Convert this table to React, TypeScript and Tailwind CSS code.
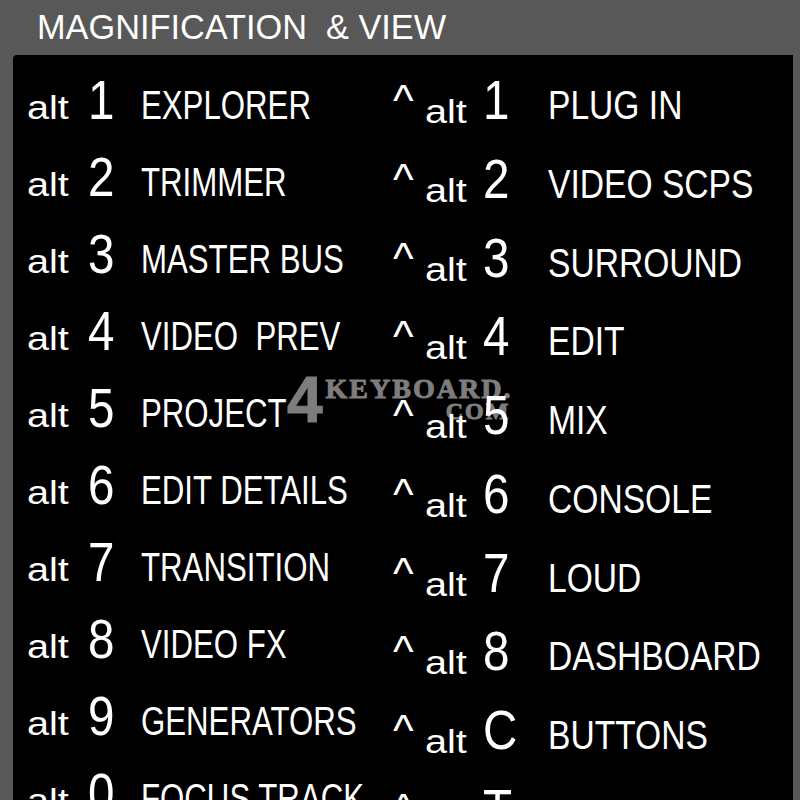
import React from "react";

const left: [string, string][] = [
  ["1", "EXPLORER"],
  ["2", "TRIMMER"],
  ["3", "MASTER BUS"],
  ["4", "VIDEO  PREV"],
  ["5", "PROJECT"],
  ["6", "EDIT DETAILS"],
  ["7", "TRANSITION"],
  ["8", "VIDEO FX"],
  ["9", "GENERATORS"],
  ["0", "FOCUS TRACK"],
];

const right: [string, string][] = [
  ["1", "PLUG IN"],
  ["2", "VIDEO SCPS"],
  ["3", "SURROUND"],
  ["4", "EDIT"],
  ["5", "MIX"],
  ["6", "CONSOLE"],
  ["7", "LOUD"],
  ["8", "DASHBOARD"],
  ["C", "BUTTONS"],
  ["T", "EVENT FADE"],
];

export default function App() {
  return (
    <div
      className="w-[800px] h-[800px] overflow-hidden bg-[#585858] flex flex-col text-white"
      style={{ fontFamily: '"Liberation Sans", Arial, sans-serif' }}
    >
      <div className="h-[55px] shrink-0 pl-[37px] pt-[9px] text-[35px] leading-none whitespace-pre">
        <span className="inline-block origin-left scale-x-[0.98]">MAGNIFICATION  &amp; VIEW</span>
      </div>
      <div className="relative flex-1 ml-[13px] mr-[7px] bg-black rounded-tl-[4px] flex pt-[17px] overflow-hidden">
        <div className="absolute left-[274px] top-[313px] z-0 flex items-start text-[#7d7d7d] select-none">
          <span className="text-[64px] font-bold leading-none [-webkit-text-stroke:1px_#7d7d7d]">4</span>
          <div className="flex flex-col items-end mt-[7px] ml-[3px]" style={{ fontFamily: '"Liberation Serif", serif' }}>
            <span className="text-[28px] font-bold leading-none tracking-[2px] [-webkit-text-stroke:1px_#7d7d7d]">KEYBOARD.</span>
            <span className="text-[24px] font-bold leading-none tracking-[2px] mr-[2px] -mt-[4px] [-webkit-text-stroke:1px_#7d7d7d]">COM</span>
          </div>
        </div>
        <div className="relative z-10 w-[380px] shrink-0 pl-[14px] flex flex-col">
          {left.map(([d, l]) => (
            <div key={l} className="flex items-baseline h-[77px] shrink-0">
              <span className="w-[61px] shrink-0 text-[33px] leading-none origin-left scale-x-[1.2]">alt</span>
              <span className="w-[53px] shrink-0 text-[56px] leading-none origin-left scale-x-[0.85]">{d}</span>
              <span className="text-[40px] leading-none whitespace-pre origin-left scale-x-[0.78]">{l}</span>
            </div>
          ))}
        </div>
        <div className="relative z-10 flex flex-col">
          {right.map(([d, l]) => (
            <div key={l} className="flex items-baseline h-[78.75px] shrink-0">
              <span className="w-[32px] shrink-0 text-[44px] leading-none -translate-y-[3px]">^</span>
              <span className="w-[58px] shrink-0 text-[33px] leading-none origin-left scale-x-[1.2] translate-y-[4px]">alt</span>
              <span className="w-[65px] shrink-0 text-[56px] leading-none origin-left scale-x-[0.85]">{d}</span>
              <span className="text-[40px] leading-none whitespace-pre origin-left scale-x-[0.84]">{l}</span>
            </div>
          ))}
        </div>
      </div>
    </div>
  );
}
